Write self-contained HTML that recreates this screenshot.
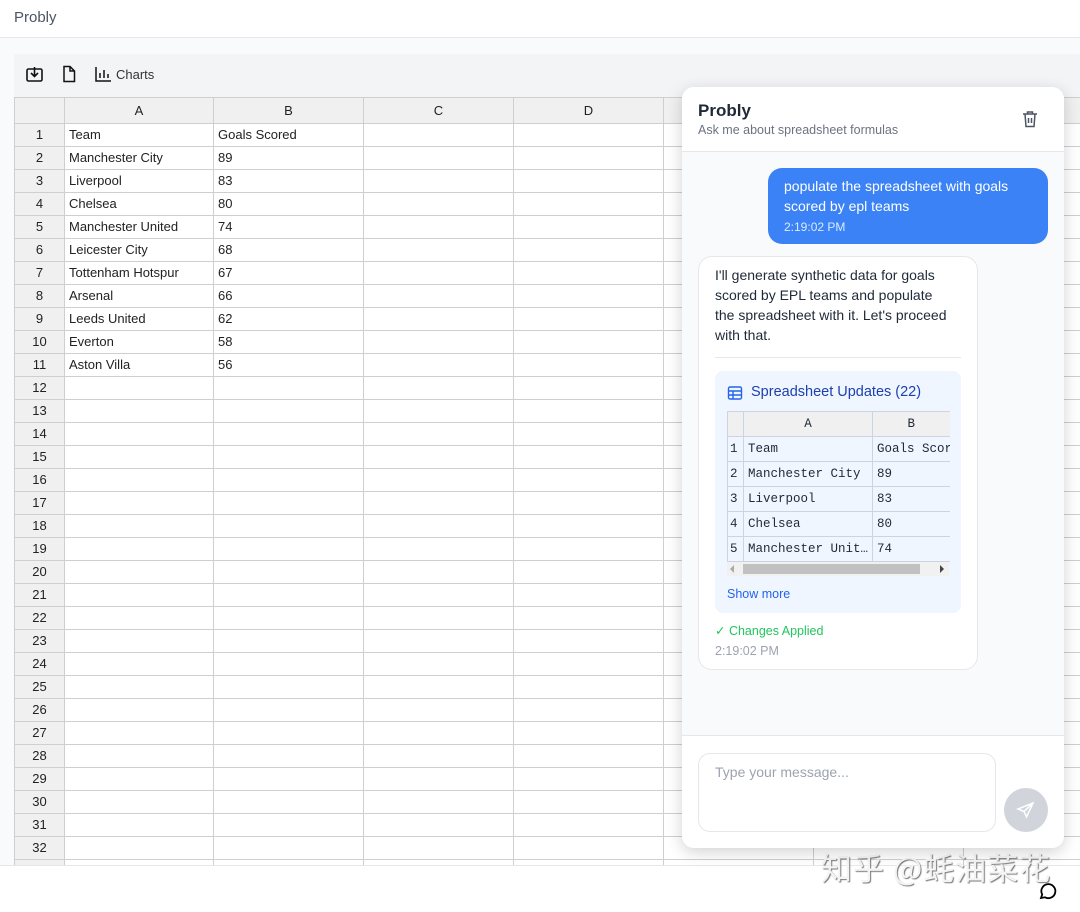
<!DOCTYPE html>
<html><head><meta charset="utf-8"><style>
*{box-sizing:border-box;margin:0;padding:0}
body{width:1080px;height:912px;overflow:hidden;background:#fff;font-family:"Liberation Sans","Noto Sans CJK SC",sans-serif;position:relative;color:#222}
.hdr{position:absolute;left:0;top:0;width:1080px;height:38px;border-bottom:1px solid #e5e7eb;background:#fff}
.hdr span{position:absolute;left:14px;top:9px;font-size:15px;color:#4b5563}
.main{position:absolute;left:0;top:38px;width:1080px;height:827px;background:#f9fafb;overflow:hidden}
.tb{position:absolute;left:14px;top:16px;width:1066px;height:43px;background:#f3f4f6}
.grid{position:absolute;left:14px;top:59px;width:1099px;border-collapse:collapse;table-layout:fixed;font-size:13px}
.grid td{border:1px solid #cfcfcf;height:23px;padding:0 4px 1px;background:#fff;white-space:nowrap;overflow:hidden}
.grid tr:first-child td{height:26px;background:#f0f0f0;text-align:center}
.grid td:first-child{background:#f0f0f0;text-align:center}
.panel{position:absolute;left:682px;top:87px;width:382px;height:761px;background:#f8fafc;border-radius:12px;box-shadow:0 4px 16px rgba(0,0,0,.18);overflow:hidden;font-family:"Liberation Sans",sans-serif}
.ph{position:absolute;left:0;top:0;width:382px;height:65px;background:#fff;border-bottom:1px solid #e5e7eb}
.user{position:absolute;left:86px;top:81px;width:280px;height:76px;background:#3b82f6;border-radius:14px;color:#fff;padding:8px 16px;font-size:14px;line-height:20px}
.bot{position:absolute;left:16px;top:169px;width:280px;height:414px;background:#fff;border:1px solid #e5e7eb;border-radius:14px;padding:8px 16px;font-size:14px;line-height:20px;color:#1f2937}
.upd{position:absolute;left:16px;top:114px;width:246px;height:242px;background:#eff6ff;border-radius:8px}
.mini{position:absolute;left:12px;top:40px;width:222px;border-collapse:collapse;font-family:"Liberation Mono",monospace;font-size:12.5px;table-layout:fixed}
.mini td{border:1px solid #cbd5e1;height:25px;padding:0 4px;white-space:nowrap;overflow:hidden}
.inp{position:absolute;left:0;top:648px;width:382px;height:113px;background:#fff;border-top:1px solid #e5e7eb}
</style></head><body>
<div class="hdr"><span>Probly</span></div>
<div class="main">
<div class="tb">
<svg style="position:absolute;left:11px;top:12px" width="20" height="18" viewBox="0 0 20 18" fill="none" stroke="#111" stroke-width="1.6"><rect x="2" y="3" width="15" height="12" rx="1.5"/><path d="M9.5 1v9M6 7l3.5 3.5L13 7"/></svg>
<svg style="position:absolute;left:48px;top:11px" width="14" height="18" viewBox="0 0 14 18" fill="none" stroke="#111" stroke-width="1.5"><path d="M2 1.5h6l4.5 4.5v10.5H2z M8 1.5v4.5h4.5"/></svg>
<svg style="position:absolute;left:81px;top:12px" width="16" height="16" viewBox="0 0 16 16" fill="none" stroke="#111" stroke-width="1.5"><path d="M1 1v14h15M5 12V7M9 12V4M13 12V8"/></svg>
<span style="position:absolute;left:102px;top:13px;font-size:13px;color:#333">Charts</span>
</div>
<table class="grid">
<colgroup><col style="width:50px"><col style="width:149px"><col style="width:150px"><col style="width:150px"><col style="width:150px"><col style="width:150px"><col style="width:150px"><col style="width:150px"></colgroup>
<tr><td></td><td>A</td><td>B</td><td>C</td><td>D</td><td>E</td><td>F</td><td>G</td></tr>
<tr><td>1</td><td>Team</td><td>Goals Scored</td><td></td><td></td><td></td><td></td><td></td></tr>
<tr><td>2</td><td>Manchester City</td><td>89</td><td></td><td></td><td></td><td></td><td></td></tr>
<tr><td>3</td><td>Liverpool</td><td>83</td><td></td><td></td><td></td><td></td><td></td></tr>
<tr><td>4</td><td>Chelsea</td><td>80</td><td></td><td></td><td></td><td></td><td></td></tr>
<tr><td>5</td><td>Manchester United</td><td>74</td><td></td><td></td><td></td><td></td><td></td></tr>
<tr><td>6</td><td>Leicester City</td><td>68</td><td></td><td></td><td></td><td></td><td></td></tr>
<tr><td>7</td><td>Tottenham Hotspur</td><td>67</td><td></td><td></td><td></td><td></td><td></td></tr>
<tr><td>8</td><td>Arsenal</td><td>66</td><td></td><td></td><td></td><td></td><td></td></tr>
<tr><td>9</td><td>Leeds United</td><td>62</td><td></td><td></td><td></td><td></td><td></td></tr>
<tr><td>10</td><td>Everton</td><td>58</td><td></td><td></td><td></td><td></td><td></td></tr>
<tr><td>11</td><td>Aston Villa</td><td>56</td><td></td><td></td><td></td><td></td><td></td></tr>
<tr><td>12</td><td></td><td></td><td></td><td></td><td></td><td></td><td></td></tr>
<tr><td>13</td><td></td><td></td><td></td><td></td><td></td><td></td><td></td></tr>
<tr><td>14</td><td></td><td></td><td></td><td></td><td></td><td></td><td></td></tr>
<tr><td>15</td><td></td><td></td><td></td><td></td><td></td><td></td><td></td></tr>
<tr><td>16</td><td></td><td></td><td></td><td></td><td></td><td></td><td></td></tr>
<tr><td>17</td><td></td><td></td><td></td><td></td><td></td><td></td><td></td></tr>
<tr><td>18</td><td></td><td></td><td></td><td></td><td></td><td></td><td></td></tr>
<tr><td>19</td><td></td><td></td><td></td><td></td><td></td><td></td><td></td></tr>
<tr><td>20</td><td></td><td></td><td></td><td></td><td></td><td></td><td></td></tr>
<tr><td>21</td><td></td><td></td><td></td><td></td><td></td><td></td><td></td></tr>
<tr><td>22</td><td></td><td></td><td></td><td></td><td></td><td></td><td></td></tr>
<tr><td>23</td><td></td><td></td><td></td><td></td><td></td><td></td><td></td></tr>
<tr><td>24</td><td></td><td></td><td></td><td></td><td></td><td></td><td></td></tr>
<tr><td>25</td><td></td><td></td><td></td><td></td><td></td><td></td><td></td></tr>
<tr><td>26</td><td></td><td></td><td></td><td></td><td></td><td></td><td></td></tr>
<tr><td>27</td><td></td><td></td><td></td><td></td><td></td><td></td><td></td></tr>
<tr><td>28</td><td></td><td></td><td></td><td></td><td></td><td></td><td></td></tr>
<tr><td>29</td><td></td><td></td><td></td><td></td><td></td><td></td><td></td></tr>
<tr><td>30</td><td></td><td></td><td></td><td></td><td></td><td></td><td></td></tr>
<tr><td>31</td><td></td><td></td><td></td><td></td><td></td><td></td><td></td></tr>
<tr><td>32</td><td></td><td></td><td></td><td></td><td></td><td></td><td></td></tr>
<tr><td>33</td><td></td><td></td><td></td><td></td><td></td><td></td><td></td></tr>
</table>
</div>
<div style="position:absolute;left:0;top:865px;width:1080px;height:47px;background:#fff;border-top:1px solid #e5e7eb"></div>
<div style="position:absolute;left:821px;top:844px;font-size:31px;color:#f4f4f4;text-shadow:1px 1px 1px #777;font-family:'Noto Sans CJK SC',sans-serif;letter-spacing:1px">知乎 @蚝油菜花</div>
<svg style="position:absolute;left:1037px;top:881px" width="20" height="20" viewBox="0 0 20 20" fill="none" stroke="#000" stroke-width="1.8"><path d="M4 17l1.2-3.5A7 7 0 1 1 8 16.3z"/></svg>

<div class="panel">
<div class="ph">
<div style="position:absolute;left:16px;top:14px;font-size:17px;font-weight:bold;color:#1f2937">Probly</div>
<div style="position:absolute;left:16px;top:36px;font-size:12.5px;color:#6b7280">Ask me about spreadsheet formulas</div>
<svg style="position:absolute;left:340px;top:23px" width="16" height="18" viewBox="0 0 16 18" fill="none" stroke="#4b5563" stroke-width="1.5"><path d="M1 4h14M5.5 4V2h5v2M3 4l1 12.5h8L13 4M6.5 8v5M9.5 8v5"/></svg>
</div>
<div class="user">populate the spreadsheet with goals scored by epl teams<div style="font-size:12px;color:#dbeafe;line-height:22px">2:19:02 PM</div></div>
<div class="bot"><div style="width:248px">I'll generate synthetic data for goals scored by EPL teams and populate<br>the spreadsheet with it. Let's proceed with that.</div>
<div style="position:absolute;left:16px;right:16px;top:100px;border-top:1px solid #e5e7eb"></div>
<div class="upd">
<svg style="position:absolute;left:12px;top:14px" width="16" height="16" viewBox="0 0 16 16" fill="none" stroke="#2563eb" stroke-width="1.4"><rect x="1.5" y="2" width="13" height="12" rx="1.5"/><path d="M1.5 6h13M1.5 10h13M6 6v8"/></svg>
<div style="position:absolute;left:36px;top:11px;font-size:14.5px;color:#1e40af">Spreadsheet Updates (22)</div>
<table class="mini"><colgroup><col style="width:16px"><col style="width:129px"><col style="width:77px"></colgroup>
<tr><td style="background:#f0f0f0"></td><td style="background:#f0f0f0;text-align:center">A</td><td style="background:#f0f0f0;text-align:center;border-right:none">B</td></tr>
<tr><td style="padding:0 2px">1</td><td>Team</td><td style="border-right:none">Goals Scor</td></tr>
<tr><td style="padding:0 2px">2</td><td>Manchester City</td><td style="border-right:none">89</td></tr>
<tr><td style="padding:0 2px">3</td><td>Liverpool</td><td style="border-right:none">83</td></tr>
<tr><td style="padding:0 2px">4</td><td>Chelsea</td><td style="border-right:none">80</td></tr>
<tr><td style="padding:0 2px">5</td><td>Manchester Unit…</td><td style="border-right:none">74</td></tr>
</table>
<div style="position:absolute;left:12px;top:191px;width:222px;height:14px;background:#f1f1f1"></div>
<div style="position:absolute;left:28px;top:193px;width:177px;height:10px;background:#c1c1c1"></div>
<div style="position:absolute;left:15px;top:194px;width:0;height:0;border:4px solid transparent;border-right:4px solid #aaa;border-left:none"></div>
<div style="position:absolute;left:225px;top:194px;width:0;height:0;border:4px solid transparent;border-left:4px solid #444;border-right:none"></div>
<div style="position:absolute;left:12px;top:213px;font-size:12.5px;color:#2563eb">Show more</div>
</div>
<div style="position:absolute;left:16px;top:364px;font-size:12.5px;color:#22c55e">✓ Changes Applied</div>
<div style="position:absolute;left:16px;top:384px;font-size:12.5px;color:#9ca3af">2:19:02 PM</div>
</div>
<div class="inp">
<div style="position:absolute;left:16px;top:17px;width:298px;height:79px;border:1px solid #e5e7eb;border-radius:12px;padding:10px 16px;font-size:14px;color:#9ca3af">Type your message...</div>
<div style="position:absolute;left:322px;top:52px;width:44px;height:44px;border-radius:50%;background:#d1d5db"></div>
<svg style="position:absolute;left:334px;top:64px" width="20" height="20" viewBox="0 0 20 20" fill="none" stroke="#fff" stroke-width="1.5"><path d="M17 3L2 9l6 2.5L10.5 17zM8 11.5L17 3"/></svg>
</div>
</div>
</body></html>
